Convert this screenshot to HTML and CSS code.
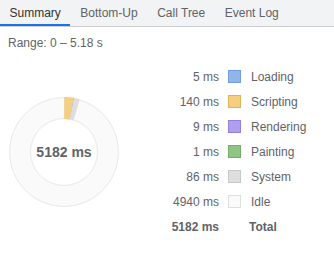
FILE: index.html
```html
<!DOCTYPE html>
<html lang="en">
<head>
    <meta charset="UTF-8">
    <title>Summary</title>
    <link rel="stylesheet" href="styles.css">
</head>
<body>
    <div class="tabs">
        <div class="tab active">Summary</div>
        <div class="tab">Bottom-Up</div>
        <div class="tab">Call Tree</div>
        <div class="tab">Event Log</div>
    </div>

    <div class="range">Range: 0 – 5.18 s</div>

    <div class="summary">
        <div class="pie">
            <svg width="110" height="110" viewBox="0 0 110 110">
                <g transform="rotate(-90 55 55)" fill="none" stroke-width="22">
                    <circle cx="55" cy="55" r="44" stroke="#fafafa"/>
                    <circle cx="55" cy="55" r="54.5" stroke="#e9e9e9" stroke-width="1"/>
                    <circle cx="55" cy="55" r="33.5" stroke="#e9e9e9" stroke-width="1"/>
                    <circle cx="55" cy="55" r="44" stroke="#8fb5ea" stroke-dasharray="0.27 300" stroke-dashoffset="0"/>
                    <circle cx="55" cy="55" r="44" stroke="#f3cf7f" stroke-dasharray="7.47 300" stroke-dashoffset="-0.27"/>
                    <circle cx="55" cy="55" r="44" stroke="#b19ded" stroke-dasharray="0.48 300" stroke-dashoffset="-7.74"/>
                    <circle cx="55" cy="55" r="44" stroke="#8fc483" stroke-dasharray="0.06 300" stroke-dashoffset="-8.22"/>
                    <circle cx="55" cy="55" r="44" stroke="#dedede" stroke-dasharray="4.59 300" stroke-dashoffset="-8.27"/>
                </g>
            </svg>
            <div class="pie-total">5182 ms</div>
        </div>

        <div class="legend">
            <div class="value">5 ms</div><div class="swatch loading"></div><div class="label">Loading</div>
            <div class="value">140 ms</div><div class="swatch scripting"></div><div class="label">Scripting</div>
            <div class="value">9 ms</div><div class="swatch rendering"></div><div class="label">Rendering</div>
            <div class="value">1 ms</div><div class="swatch painting"></div><div class="label">Painting</div>
            <div class="value">86 ms</div><div class="swatch system"></div><div class="label">System</div>
            <div class="value">4940 ms</div><div class="swatch idle"></div><div class="label">Idle</div>
            <div class="value total">5182 ms</div><div></div><div class="label total total-label">Total</div>
        </div>
    </div>
</body>
</html>
```

FILE: styles.css
```css
body {
    margin: 0;
    font-family: "Liberation Sans", Arial, sans-serif;
    font-size: 12px;
    background-color: white;
    color: #5f6368;
}

.tabs {
    display: flex;
    height: 26px;
    background-color: #f1f3f4;
    border-bottom: 1px solid #cbcdd1;
}

.tab {
    padding: 0 9.5px;
    line-height: 26px;
    color: #5f6368;
    box-sizing: border-box;
    height: 26px;
}

.tab.active {
    color: #333;
    border-bottom: 2px solid #1a73e8;
}

.tab + .tab {
    margin-left: 0.5px;
}

.range {
    padding: 8px 8px 0;
    line-height: 16px;
}

.summary {
    display: flex;
    align-items: center;
    margin-top: 13px;
}

.pie {
    position: relative;
    width: 110px;
    height: 110px;
    margin-left: 9px;
    margin-right: 9px;
}

.pie svg {
    display: block;
}

.pie-total {
    position: absolute;
    top: 0;
    left: 0;
    width: 110px;
    line-height: 110px;
    text-align: center;
    font-size: 14px;
    font-weight: bold;
    color: #5f6368;
}

.legend {
    display: grid;
    grid-template-columns: 91px 13px auto;
    grid-auto-rows: 25px;
    column-gap: 0;
    align-items: center;
}

.value {
    text-align: right;
    padding-right: 0;
}

.swatch {
    width: 11px;
    height: 11px;
    margin-left: 9px;
    border: 1px solid;
}

.label {
    padding-left: 19px;
    white-space: nowrap;
}

.total {
    font-weight: bold;
}

.total-label {
    padding-left: 17px;
}

.loading { background-color: #8fb5ea; border-color: #6f9de0; }
.scripting { background-color: #f3cf7f; border-color: #deb35c; }
.rendering { background-color: #b19ded; border-color: #957ee2; }
.painting { background-color: #8fc483; border-color: #74ad66; }
.system { background-color: #dedede; border-color: #c8c8c8; }
.idle { background-color: #fafafa; border-color: #dedede; }
```
